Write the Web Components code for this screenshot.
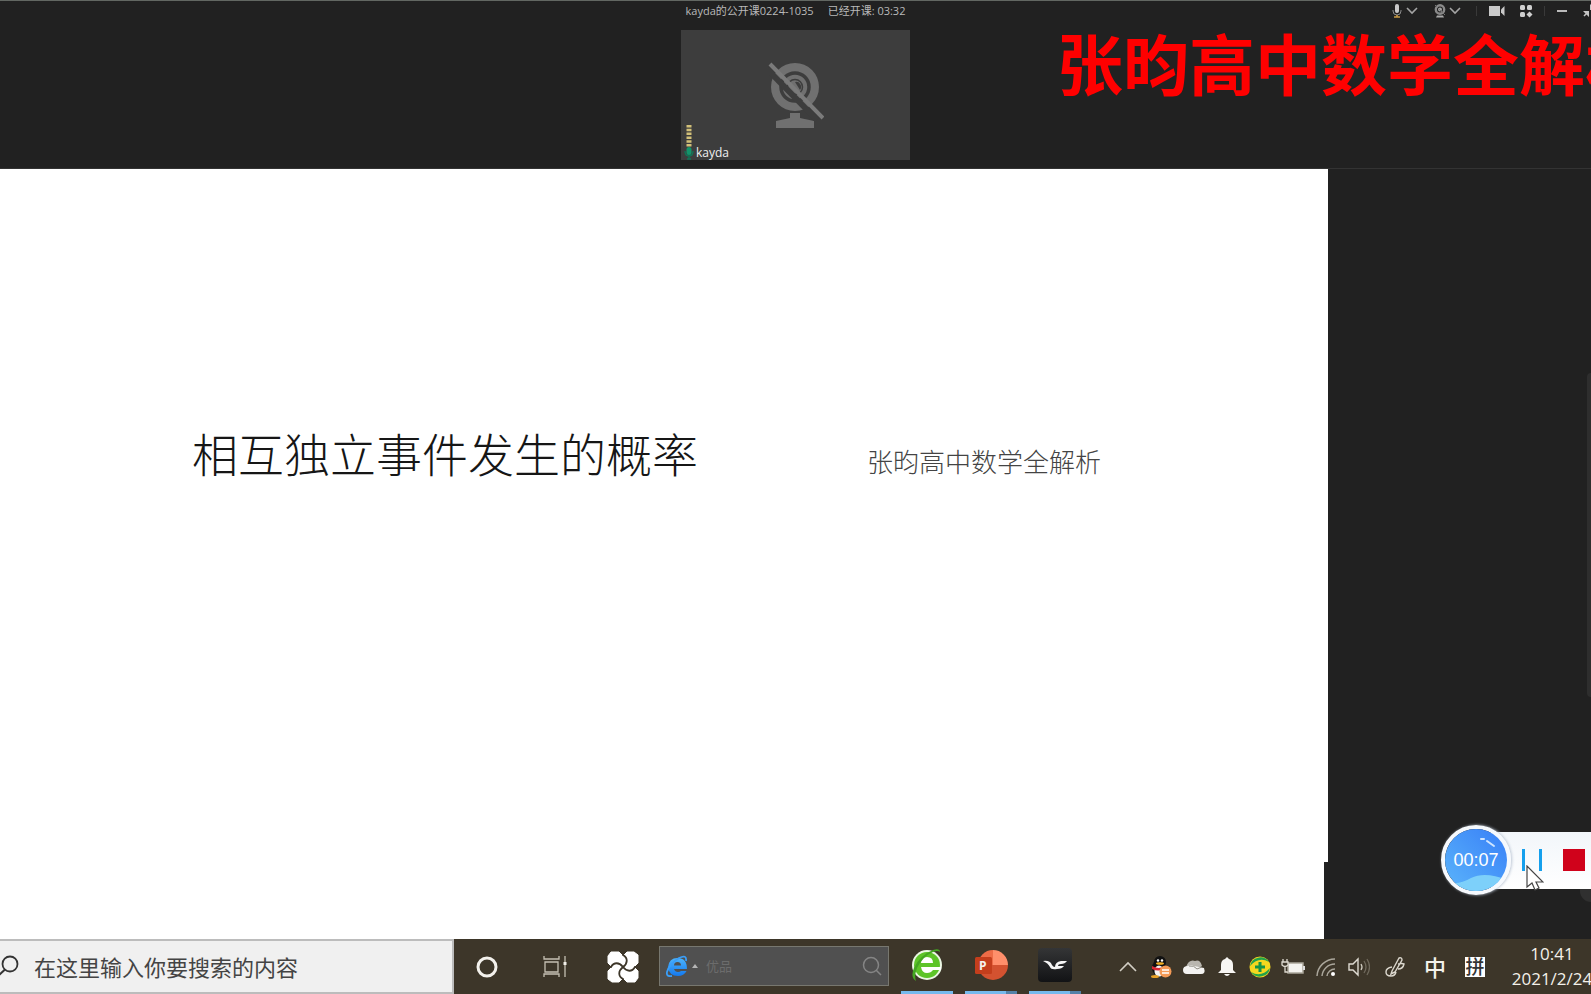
<!DOCTYPE html>
<html lang="zh-CN">
<head>
<meta charset="utf-8">
<meta name="viewport" content="width=device-width, initial-scale=1">
<title>kayda的公开课0224-1035</title>
<style>
  html, body {
    margin: 0;
    height: 100%;
    overflow: hidden;
  }
  body {
    background: #212121;
    font-family: "Open Sans", "Noto Sans CJK SC", sans-serif;
  }
</style>
</head>
<body>
<live-class></live-class>

<script>
const PETAL = '<path d="M16 16H5L1 12V5L4 1H12L16 5z" stroke="#fff" stroke-width="1" stroke-linejoin="round"/>'
const TURNS = [0, 90, 180, 270]

const ICONS = {
  mic: ['0 0 12 14', `<rect x="4" y="0" width="4" height="9" rx="2" fill="#c8c8c8"/><path d="M2 6v1a4 4 0 0 0 8 0V6" fill="none" stroke="#8c8c8c"/><path d="M6 11v2M3 13h6" stroke="#c79a45" stroke-width="1.6"/>`],
  chevron: ['0 0 12 8', `<path d="M1 1l5 5 5-5" fill="none" stroke="#a4a4a4" stroke-width="1.6"/>`],
  camera: ['0 0 12 14', `<circle cx="6" cy="5.500" r="4.200" fill="none" stroke="#8a8a8a" stroke-width="2.400"/><circle cx="6" cy="5.500" r="2" fill="#a0a0a0"/><path d="M2 13.500l1-2h6l1 2z" fill="#aaa"/><path d="M1 1l10 10" stroke="#777" stroke-width="1"/>`],
  video: ['0 0 16 12', `<path d="M0 1h11v10H0z" fill="#c9c9c9"/><path d="M12 4.500L15.500 1v10L12 7.500z" fill="#c9c9c9"/>`],
  apps: ['0 0 14 14', `<g fill="#cfcfcf"><rect x="1" y="1" width="5" height="5" rx="1.500"/><rect x="8" y="1" width="5" height="5" rx="1.500"/><rect x="1" y="8" width="5" height="5" rx="1.500"/><path d="M10.500 7.500l3 3-3 3-3-3z"/></g>`],
  minus: ['0 0 12 12', `<path d="M1 6h10" stroke="#bbb" stroke-width="2"/>`],
  expand: ['0 0 14 14', `<path d="M0 7h6v6zM7 0v6h6z" fill="#c4c4c4"/><path d="M1 12l4-4M9 4l4-4" stroke="#c4c4c4" stroke-width="1.500"/>`],
  webcam: ['0 0 56 66', `
    <circle cx="27" cy="25" r="24" fill="#707070"/>
    <g fill="none" stroke="#3d3d3d">
      <circle cx="27" cy="25" r="14" stroke-width="3.500"/>
      <circle cx="27" cy="25" r="7.500" stroke-width="1.500"/>
    </g>
    <path d="M27 20a5 5 0 0 1 5 8z" fill="#3d3d3d"/>
    <path d="M22 51h10v5l14 3v7H8v-7l14-3z" fill="#707070"/>
    <path d="M-1 7l50 51" stroke="#3d3d3d" stroke-width="6"/>
    <path d="M2 2l53 54" stroke="#7b7b7b" stroke-width="4"/>`],
  voice: ['0 0 10 36', `<path d="M5 1v22" stroke="#d2c078" stroke-width="5" stroke-dasharray="2.500 1.300"/><rect x="2.500" y="23" width="5" height="8" rx="2.500" fill="#12946a"/><path d="M1 27q0 5 4 5t4-5M5 32v3M3 35h4" fill="none" stroke="#0f7657" stroke-width="1.300"/>`],
  cursor: ['0 0 18 26', `<path d="M1 1v21l5-4 3 7 4-2-3-6h7z" fill="#fff" stroke="#444" stroke-width="1.200"/>`],
  search: ['0 0 24 24', `<circle cx="14" cy="9" r="7.500" fill="none" stroke="#333" stroke-width="1.800"/><path d="M9 14.500L1 22" stroke="#333" stroke-width="2"/>`],
  cortana: ['0 0 24 24', `<circle cx="12" cy="12" r="9" fill="none" stroke="#f3f1ec" stroke-width="3"/>`],
  tasks: ['0 0 24 24', `<g fill="none" stroke="#c5c0b2" stroke-width="1.300"><path d="M1 1v3h15V1M2 7h13v10H2zM1 22v-3h15v3M22 1v21"/></g><rect x="20.500" y="7" width="3" height="3" fill="#f2f0e9"/>`],
  clover: ['0 0 32 32', `
    <g fill="#fff">
      ${TURNS.map(turn => `<g transform="rotate(${turn} 16 16)">${PETAL}</g>`).join('')}
    </g>
    <g fill="none" stroke="#3d3629" stroke-width="1.800">
      ${TURNS.map(turn => `<path d="M16 16C21 12 21 7 16 4V0" transform="rotate(${turn} 16 16)"/>`).join('')}
    </g>`],
  ie: ['0 0 22 22', `<defs><linearGradient id="blue" x2="0" y2="1"><stop stop-color="#4db4fb"/><stop offset="1" stop-color="#1479ee"/></linearGradient></defs><path fill="url(#blue)" fill-rule="evenodd" d="M2 12Q3 3 11.500 3Q21 3 21 14H8Q9 17 12 17Q14 17 15 16H20.500Q18 21 12 21Q3 21 2 12zM8 10.500H15Q15 7 11.500 7Q8 7 8 10.500z"/><path d="M6 21Q0 22 1 17Q3 9 13 3Q21-1 20 6" fill="none" stroke="#3a9ef8" stroke-width="1.800"/>`],
  up: ['0 0 6 6', `<path d="M0 5l3-4 3 4z" fill="#b5b5b5"/>`],
  find: ['0 0 20 20', `<circle cx="9" cy="9" r="7.500" fill="none" stroke="#858585" stroke-width="1.500"/><path d="M14 14l5 5" stroke="#858585" stroke-width="1.500"/>`],
  browser: ['0 0 32 34', `<circle cx="16" cy="17" r="15" fill="#ebf7e3"/><circle cx="16" cy="17" r="13" fill="#5dc428"/><path d="M10 15Q10 9 16 9Q22 9 22 15zM10 19H30V22H22Q20 25 16 25Q11 25 10 19z" fill="#fff"/><path d="M5 33Q-1 29 3 20Q9 7 22 2Q29 0 29 4Q27 2 22 4Q12 8 6 20Q3 28 5 33z" fill="#44a622"/>`],
  ppt: ['0 0 34 32', `<path d="M19 1a15 15 0 0 0-15 15h15z" fill="#ed6c47"/><path d="M19 1a15 15 0 0 1 15 15H19z" fill="#ff8f6b"/><path d="M4 16a15 15 0 0 0 30 0z" fill="#d35230"/><rect x="1" y="8" width="17" height="17" rx="1.500" fill="#c43e1c"/>`],
  wings: ['0 0 34 34', `<defs><linearGradient id="g" x2="0" y2="1"><stop stop-color="#343536"/><stop offset="1" stop-color="#121315"/></linearGradient></defs><rect width="34" height="34" rx="4" fill="url(#g)"/><path d="M5 13Q12 12 14 17Q15 19 17 19Q17 14 23 13H29Q27 16 23 16Q20 16 20 18H26Q24 21 19 21Q13 22 12 19Q10 15 5 13z" fill="#f5f5f5"/>`],
  more: ['0 0 18 12', `<path d="M1 10l8-8 8 8" fill="none" stroke="#d2cec4" stroke-width="1.600"/>`],
  qq: ['0 0 22 22', `<ellipse cx="9" cy="12" rx="7" ry="8" fill="#111"/><ellipse cx="10" cy="6" rx="6" ry="6" fill="#111"/><ellipse cx="9" cy="15" rx="4.500" ry="5.500" fill="#f4f4f4"/><circle cx="8" cy="4.500" r="1.200" fill="#fff"/><circle cx="12" cy="4.500" r="1.200" fill="#fff"/><ellipse cx="10" cy="7.500" rx="4" ry="1.300" fill="#f4ae22"/><path d="M2 10q7 4 13 0v3q-7 3-13 0z" fill="#dc2936"/><ellipse cx="5" cy="20.500" rx="4" ry="1.500" fill="#e8a126"/><circle cx="15.500" cy="15.500" r="6" fill="#f49a56"/><path d="M12 14h7M12 17h7" stroke="#fff" stroke-width="1.300"/>`],
  cloud: ['0 0 24 18', `<path d="M4 9Q7 1 13 3Q18 1 20 8L12 13z" fill="#b9b6af"/><path d="M5 16Q1 16 1 12Q1 8 6 8Q9 6 12 8L22 10Q24 16 19 16z" fill="#f4f3f1"/><path d="M7 8Q12 7 15 11l5-2" fill="none" stroke="#8f8c83"/>`],
  bell: ['0 0 20 20', `<path d="M10 0l2 2Q16 3 16 8v5l3 3H1l3-3V8Q4 3 8 2zM7 17h6q-3 4-6 0z" fill="#f7f6f3"/>`],
  guard: ['0 0 22 22', `<circle cx="11" cy="11" r="10.500" fill="#f4d71f"/><path d="M1 10A10.500 10.500 0 0 1 20 6Q10 0 1 10zM21 12A10.500 10.500 0 0 1 2 16Q12 22 21 12z" fill="#23a34b"/><path d="M11 6v10M6 11h10" stroke="#159447" stroke-width="3"/>`],
  battery: ['0 0 24 18', `<rect x="7" y="5" width="15" height="10" fill="#f4f3ef" stroke="#aaa69a" stroke-width="1.500"/><path d="M23 8v4" stroke="#ddd" stroke-width="2"/><path d="M2 1v3M6 1v3M1 4h6v3q-3 3-6 0zM4 9v5h3" fill="#3d3629" stroke="#dedad0" stroke-width="1.300"/>`],
  wifi: ['0 0 20 20', `<g fill="none" stroke="#aaa69b" stroke-width="1.500"><path d="M1 19A18 18 0 0 1 19 2M6 19A13 13 0 0 1 19 7M11 19A8 8 0 0 1 19 12"/></g><circle cx="17" cy="17" r="2" fill="#fff"/>`],
  sound: ['0 0 22 20', `<path d="M1 7h4l5-5v16l-5-5H1z" fill="none" stroke="#dedad1" stroke-width="1.400"/><path d="M13 7q2 3 0 6" fill="none" stroke="#d0ccc1" stroke-width="1.300"/><path d="M16 4q4 6 0 12M19 2q5 8 0 16" fill="none" stroke="#6f695c" stroke-width="1.300"/>`],
  pen: ['0 0 20 20', `<path d="M7 14L14 1q3-1 3 2L10 15l-4 2zM7 10Q1 11 1 15t5 4q4 0 5-4M13 7q4-1 6 0-1 5-6 5" fill="none" stroke="#dcd8ce" stroke-width="1.400"/>`]
}

class UiIcon extends HTMLElement {
  connectedCallback () {
    const [box, shapes] = ICONS[this.getAttribute('name')]
    const [, , width, height] = box.split(' ')
    this.attachShadow({ mode: 'open' })
    this.shadowRoot.innerHTML = `
      <style>
        :host { display: block; flex: none; }
        svg { display: block; }
      </style>
      <svg viewBox="${box}" width="${width}" height="${height}" aria-hidden="true">${shapes}</svg>
    `
  }
}

class IconButton extends HTMLElement {
  connectedCallback () {
    this.attachShadow({ mode: 'open' })
    this.shadowRoot.innerHTML = `
      <style>
        :host { display: block; flex: none; }
        button {
          position: relative;
          display: flex;
          align-items: center;
          justify-content: center;
          width: 100%;
          height: 100%;
          margin: 0;
          padding: 0;
          border: 0;
          background: none;
          color: #f4f2ec;
          font: inherit;
        }
      </style>
      <button type="button" aria-label="${this.getAttribute('label')}"><slot></slot></button>
    `
  }
}

class MeetingTools extends HTMLElement {
  connectedCallback () {
    this.attachShadow({ mode: 'open' })
    this.shadowRoot.innerHTML = `
      <style>
        :host { display: flex; align-items: center; overflow: hidden; justify-content: flex-end; }
        icon-button { width: 14px; height: 20px; }
        .pair { display: flex; gap: 1px; margin-right: 14px; }
        .line { width: 1px; height: 10px; background: #393939; }
        .video { width: 16px; margin: 0 14px 0 12px; }
        .apps { margin-right: 11px; }
        .minus { margin: 0 14px 0 10px; }
        .expand { width: 8px; overflow: hidden; }
        .expand ui-icon { margin-right: -6px; }
      </style>
      <div class="pair">
        <icon-button label="麦克风"><ui-icon name="mic"></ui-icon></icon-button>
        <icon-button label="麦克风选项"><ui-icon name="chevron"></ui-icon></icon-button>
      </div>
      <div class="pair">
        <icon-button label="摄像头"><ui-icon name="camera"></ui-icon></icon-button>
        <icon-button label="摄像头选项"><ui-icon name="chevron"></ui-icon></icon-button>
      </div>
      <span class="line"></span>
      <icon-button class="video" label="录制"><ui-icon name="video"></ui-icon></icon-button>
      <icon-button class="apps" label="布局"><ui-icon name="apps"></ui-icon></icon-button>
      <span class="line"></span>
      <icon-button class="minus" label="最小化"><ui-icon name="minus"></ui-icon></icon-button>
      <icon-button class="expand" label="全屏"><ui-icon name="expand"></ui-icon></icon-button>
    `
  }
}

class VideoTile extends HTMLElement {
  connectedCallback () {
    this.attachShadow({ mode: 'open' })
    this.shadowRoot.innerHTML = `
      <style>
        :host {
          display: grid;
          grid-template-columns: 1fr;
          height: 130px;
          background: #3d3d3d;
          color: #f0f0f0;
          font-size: 12px;
          line-height: 14px;
        }
        ui-icon, .name { grid-area: 1 / 1; }
        .camera { place-self: center; }
        .name { display: flex; align-items: flex-end; gap: 2px; place-self: end start; padding-left: 3px; }
      </style>
      <ui-icon class="camera" name="webcam"></ui-icon>
      <div class="name"><ui-icon name="voice"></ui-icon><slot></slot></div>
    `
  }
}

class ClassHeader extends HTMLElement {
  connectedCallback () {
    this.attachShadow({ mode: 'open' })
    this.shadowRoot.innerHTML = `
      <style>
        :host {
          display: grid;
          grid-template-columns: minmax(0, 1fr) 229px minmax(0, 1fr);
          grid-template-rows: 29px 130px;
          padding-bottom: 8px;
          border-top: 1px solid #626762;
          border-bottom: 1px solid #333;
        }
        .title {
          grid-column: 2;
          display: flex;
          justify-content: center;
          gap: 14px;
          color: #b9b9b9;
          font-size: 11px;
          line-height: 20px;
          white-space: nowrap;
        }
        meeting-tools { height: 20px; }
        video-tile { grid-column: 2; }
        .watermark {
          overflow: hidden;
          padding-left: 147px;
          color: #f00;
          font-size: 66px;
          font-weight: 700;
          line-height: 68px;
          white-space: nowrap;
        }
      </style>
      <div class="title"><span>kayda的公开课0224-1035</span><span>已经开课: 03:32</span></div>
      <meeting-tools></meeting-tools>
      <video-tile>kayda</video-tile>
      <div class="watermark">张昀高中数学全解析</div>
    `
  }
}

class LessonSlide extends HTMLElement {
  connectedCallback () {
    this.attachShadow({ mode: 'open' })
    this.shadowRoot.innerHTML = `
      <style>
        :host { display: flex; flex-direction: column; }
        .page {
          flex: 1;
          display: grid;
          grid-template-columns: 192fr 675fr 461fr;
          align-content: start;
          align-items: center;
          padding-top: 249px;
          background: #fff;
          white-space: nowrap;
        }
        h1, p { margin: 0; }
        h1 { grid-column: 2; color: #161616; font-size: 46px; font-weight: 300; line-height: 72px; }
        p { padding-top: 16px; color: #444; font-size: 26px; font-weight: 300; line-height: 36px; }
        .foot { height: 77px; margin-right: 4px; background: #fff; }
      </style>
      <div class="page">
        <h1><slot></slot></h1>
        <p><slot name="author"></slot></p>
      </div>
      <div class="foot"></div>
    `
  }
}

class ScreenRecorder extends HTMLElement {
  connectedCallback () {
    this.attachShadow({ mode: 'open' })
    this.shadowRoot.innerHTML = `
      <style>
        :host { display: flex; align-items: center; }
        .ball {
          display: grid;
          place-items: center;
          box-sizing: border-box;
          width: 70px;
          height: 70px;
          border: 4px solid #f6f9fd;
          border-radius: 50%;
          overflow: hidden;
          z-index: 1;
          color: #fff;
          font: 18px/24px "Liberation Sans", sans-serif;
          box-shadow: 1px 0 3px #b9c4d3;
        }
        .ball svg, .ball time { grid-area: 1 / 1; }
        .ball time { z-index: 1; }
        .bar {
          position: relative;
          display: flex;
          align-items: center;
          gap: 20px;
          box-sizing: border-box;
          height: 57px;
          margin-left: -20px;
          padding: 0 6px 0 30px;
          background: linear-gradient(#f2f6fa, #fff);
        }
        .bar icon-button { height: 24px; width: 22px; }
        .pause { box-sizing: border-box; width: 20px; height: 22px; border: solid #16a0ed; border-width: 0 3px; }
        .stop { width: 22px; height: 22px; background: #d0021b; }
        .cursor { position: absolute; left: 35px; top: 33px; pointer-events: none; }
      </style>
      <div class="ball">
        <svg width="62" height="62" viewBox="0 0 62 62" aria-hidden="true">
          <defs><linearGradient id="sky" x1="0" y1="1" x2="1" y2="0"><stop stop-color="#5bb5fb"/><stop offset="1" stop-color="#387ff7"/></linearGradient></defs>
          <path d="M0 0h62v62H0z" fill="url(#sky)"/>
          <path d="M7 54Q16 55 26 49Q40 42 62 51v11H7z" fill="#7dd0fa"/>
          <path d="M36 10h3M42 12l7 5" stroke="#cfe5ff" stroke-width="2" stroke-linecap="round"/>
        </svg>
        <time>00:07</time>
      </div>
      <div class="bar">
        <icon-button label="暂停"><span class="pause"></span></icon-button>
        <icon-button label="停止"><span class="stop"></span></icon-button>
        <ui-icon class="cursor" name="cursor"></ui-icon>
      </div>
    `
  }
}

class TaskBar extends HTMLElement {
  connectedCallback () {
    const tray = [
      ['more', '显示隐藏的图标'], ['qq', 'QQ'], ['cloud', 'OneDrive'], ['bell', '通知'],
      ['guard', '安全卫士'], ['battery', '电池'], ['wifi', '网络'], ['sound', '音量']
    ]
    this.attachShadow({ mode: 'open' })
    this.shadowRoot.innerHTML = `
      <style>
        :host { display: flex; height: 55px; background: #3d3629; overflow: hidden; }
        input { min-width: 0; padding: 0; border: 0; outline: 0; background: none; font: inherit; }
        .search {
          flex: none;
          display: flex;
          align-items: center;
          gap: 14px;
          box-sizing: border-box;
          width: 454px;
          border: solid #bcbcbc;
          border-width: 2px 2px 2px 0;
          background: #f0f0f0;
          font-size: 22px;
        }
        .search ui-icon { margin-left: -4px; }
        .search input { flex: 1; height: 40px; color: #333; }
        .search input::placeholder { color: #444; opacity: 1; }
        .system { display: flex; gap: 2px; margin-right: 3px; }
        .system icon-button { width: 66px; }
        .quick {
          display: flex;
          align-items: center;
          align-self: center;
          box-sizing: border-box;
          width: 230px;
          height: 40px;
          margin: 0 12px 2px 0;
          padding: 0 6px;
          border: 1px solid #77776f;
          background: #505050;
          font-size: 13px;
        }
        .quick ui-icon { margin-right: 4px; }
        .quick input { flex: 1; padding-left: 4px; }
        .quick input::placeholder { color: #6c6c6c; opacity: 1; }
        .quick icon-button { width: 20px; height: 20px; }
        .quick icon-button ui-icon { margin: 0; }
        .apps { display: flex; gap: 12px; }
        .apps icon-button { width: 52px; border-bottom: 3px solid #76b9ed; box-sizing: border-box; }
        .apps .many { border-image: linear-gradient(90deg, #76b9ed 39px, #5481a8 39px) 3; border-width: 0 0 3px; }
        .apps b {
          position: absolute;
          left: 14px;
          top: 18px;
          font: 700 12px/18px "Open Sans", sans-serif;
        }
        .tray { display: flex; margin-left: auto; }
        .tray icon-button { width: 33px; }
        .tray .wide { width: 40px; font-size: 22px; line-height: 24px; font-weight: 500; }
        .pin { width: 20px; background: #fff; color: #333; font-size: 19px; line-height: 20px; text-align: center; }
        .clock { width: 80px; padding: 2px 0 0 16px; color: #f4f1ea; font-size: 17px; line-height: 25px; white-space: nowrap; }
        .clock div { width: 82px; text-align: center; }
      </style>
      <label class="search">
        <ui-icon name="search"></ui-icon>
        <input type="text" aria-label="搜索" placeholder="在这里输入你要搜索的内容">
      </label>
      <div class="system">
        <icon-button label="Cortana"><ui-icon name="cortana"></ui-icon></icon-button>
        <icon-button label="任务视图"><ui-icon name="tasks"></ui-icon></icon-button>
        <icon-button label="应用"><ui-icon name="clover"></ui-icon></icon-button>
      </div>
      <label class="quick">
        <ui-icon name="ie"></ui-icon>
        <ui-icon name="up"></ui-icon>
        <input type="text" aria-label="快速搜索" placeholder="优品">
        <icon-button label="查找"><ui-icon name="find"></ui-icon></icon-button>
      </label>
      <div class="apps">
        <icon-button label="浏览器"><ui-icon name="browser"></ui-icon></icon-button>
        <icon-button class="many" label="PowerPoint"><ui-icon name="ppt"></ui-icon><b>P</b></icon-button>
        <icon-button class="many" label="课堂"><ui-icon name="wings"></ui-icon></icon-button>
      </div>
      <div class="tray">
        ${tray.map(([name, label]) => `<icon-button label="${label}"><ui-icon name="${name}"></ui-icon></icon-button>`).join('')}
        <icon-button class="wide" label="手写"><ui-icon name="pen"></ui-icon></icon-button>
        <icon-button class="wide" label="中文">中</icon-button>
        <icon-button class="wide" label="拼音"><span class="pin">拼</span></icon-button>
        <div class="clock"><div>10:41</div><div>2021/2/24</div></div>
      </div>
    `
  }
}

class LiveClass extends HTMLElement {
  connectedCallback () {
    this.attachShadow({ mode: 'open' })
    this.shadowRoot.innerHTML = `
      <style>
        :host { display: flex; flex-direction: column; height: 100vh; }
        main { position: relative; flex: 1; display: grid; grid-template-columns: minmax(0, 1fr) 263px; }
        .side { display: flex; justify-content: flex-end; padding-top: 204px; }
        .handle { width: 4px; height: 324px; border-radius: 4px 0 0 4px; background: #2e2e2e; }
        .corner { position: absolute; right: 0; bottom: 37px; width: 11px; height: 20px; border-radius: 0 0 0 14px; background: #303030; }
        screen-recorder { position: absolute; right: 0; bottom: 44px; }
      </style>
      <class-header></class-header>
      <main>
        <lesson-slide>相互独立事件发生的概率<span slot="author">张昀高中数学全解析</span></lesson-slide>
        <div class="side"><div class="handle"></div></div>
        <div class="corner"></div>
        <screen-recorder></screen-recorder>
      </main>
      <task-bar></task-bar>
    `
  }
}

window.customElements.define('ui-icon', UiIcon)
window.customElements.define('icon-button', IconButton)
window.customElements.define('meeting-tools', MeetingTools)
window.customElements.define('video-tile', VideoTile)
window.customElements.define('class-header', ClassHeader)
window.customElements.define('lesson-slide', LessonSlide)
window.customElements.define('screen-recorder', ScreenRecorder)
window.customElements.define('task-bar', TaskBar)
window.customElements.define('live-class', LiveClass)
</script>
</body>
</html>
